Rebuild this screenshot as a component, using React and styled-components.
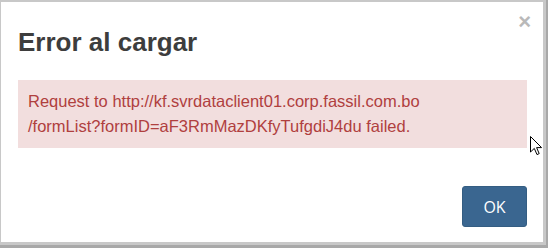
import React from 'react';
import styled, { createGlobalStyle } from 'styled-components';

const GlobalStyle = createGlobalStyle`
    html, body {
        margin: 0;
        padding: 0;
        background: #c8c8c8;
    }
    body {
        width: 548px;
        height: 248px;
        overflow: hidden;
    }
`

function Cursor() {
    return (
        <CursorWrap>
            <svg width="13" height="20" viewBox="0 0 13 20">
                <path d="M0.5 0.5 L0.5 16 L4.3 12.4 L7 18.6 L9.2 17.6 L6.6 11.6 L11.6 11.6 Z"
                    fill="#fff" stroke="#000" strokeWidth="1" strokeLinejoin="miter" />
            </svg>
        </CursorWrap>
    );
}

export default function App() {
    return (
        <>
            <GlobalStyle />
            <Frame>
                <Dialog>
                    <Header>
                        <Title>Error al cargar</Title>
                        <CloseButton aria-label="Cerrar">×</CloseButton>
                    </Header>
                    <Body>
                        <Alert>
                            Request to http://kf.svrdataclient01.corp.fassil.com.bo
                            <br />
                            /formList?formID=aF3RmMazDKfyTufgdiJ4du failed.
                        </Alert>
                    </Body>
                    <Footer>
                        <OkButton>OK</OkButton>
                    </Footer>
                    <Cursor />
                </Dialog>
            </Frame>
        </>
    );
}

const Frame = styled.div `
    width: 548px;
    height: 248px;
    box-sizing: border-box;
    padding: 2px 3px 3px 1px;
    border-bottom: 3px solid #a8a8a8;
    border-right: 2px solid #a8a8a8;
`
const Dialog = styled.div `
    position: relative;
    height: 100%;
    background: #fff;
    display: flex;
    flex-direction: column;
    padding: 0 16px 0 17px;
    font-family: "Liberation Sans", Arial, sans-serif;
`
const Header = styled.div `
    display: flex;
    align-items: flex-start;
    justify-content: space-between;
    padding-top: 26px;
    height: 51px;
    box-sizing: border-box;
`
const Title = styled.h1 `
    margin: 0;
    font-size: 26px;
    line-height: 28px;
    font-weight: bold;
    color: #3d3d3d;
`
const CloseButton = styled.button `
    margin: -17px -4px 0 0;
    padding: 0;
    border: 0;
    background: none;
    font-family: "Liberation Sans", Arial, sans-serif;
    font-size: 22px;
    font-weight: bold;
    line-height: 1;
    color: #b9b9b9;
    cursor: pointer;
`
const Body = styled.div `
    padding-top: 27px;
`
const Alert = styled.div `
    background: #f2dede;
    color: #b0403e;
    font-size: 16.5px;
    line-height: 25px;
    padding: 9px 10px 9px 10px;
`
const Footer = styled.div `
    display: flex;
    justify-content: flex-end;
    padding-top: 38px;
`
const OkButton = styled.button `
    width: 65px;
    height: 41px;
    background: #3a6690;
    border: 1px solid #345d82;
    border-radius: 3px;
    color: #fff;
    font-family: "Open Sans", "Noto Sans", sans-serif;
    font-size: 16px;
    cursor: pointer;
`
const CursorWrap = styled.div `
    position: absolute;
    left: 529px;
    top: 134px;
    line-height: 0;
`
